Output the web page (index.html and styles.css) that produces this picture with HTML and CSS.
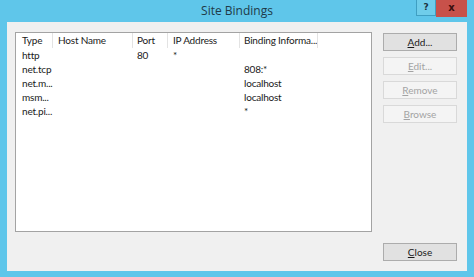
FILE: index.html
```html
<!DOCTYPE html>
<html>
<head>
<meta charset="utf-8">
<link rel="stylesheet" href="styles.css">
</head>
<body>
<div class="window">
  <div class="titlebar">
    <div class="tb-spacer"></div>
    <div class="title">Site Bindings</div>
    <div class="tb-buttons">
      <div class="tb-help">?</div>
      <div class="tb-close">x</div>
    </div>
  </div>
  <div class="client">
    <div class="main">
      <div class="list">
        <div class="row head">
          <div class="c c-type">Type</div>
          <div class="c c-host">Host Name</div>
          <div class="c c-port">Port</div>
          <div class="c c-ip">IP Address</div>
          <div class="c c-bind">Binding Informa...</div>
          <div class="c c-rest"></div>
        </div>
        <div class="row">
          <div class="c c-type">http</div>
          <div class="c c-host"></div>
          <div class="c c-port">80</div>
          <div class="c c-ip">*</div>
          <div class="c c-bind"></div>
        </div>
        <div class="row">
          <div class="c c-type">net.tcp</div>
          <div class="c c-host"></div>
          <div class="c c-port"></div>
          <div class="c c-ip"></div>
          <div class="c c-bind">808:*</div>
        </div>
        <div class="row">
          <div class="c c-type">net.m...</div>
          <div class="c c-host"></div>
          <div class="c c-port"></div>
          <div class="c c-ip"></div>
          <div class="c c-bind">localhost</div>
        </div>
        <div class="row">
          <div class="c c-type">msm...</div>
          <div class="c c-host"></div>
          <div class="c c-port"></div>
          <div class="c c-ip"></div>
          <div class="c c-bind">localhost</div>
        </div>
        <div class="row">
          <div class="c c-type">net.pi...</div>
          <div class="c c-host"></div>
          <div class="c c-port"></div>
          <div class="c c-ip"></div>
          <div class="c c-bind">*</div>
        </div>
      </div>
      <div class="buttons">
        <div class="btn"><span class="u">A</span>dd...</div>
        <div class="btn disabled"><span class="u">E</span>dit...</div>
        <div class="btn disabled"><span class="u">R</span>emove</div>
        <div class="btn disabled"><span class="u">B</span>rowse</div>
      </div>
    </div>
    <div class="footer">
      <div class="btn"><span class="u">C</span>lose</div>
    </div>
  </div>
</div>
</body>
</html>
```
FILE: styles.css
```css
* { box-sizing: border-box; }
html, body { margin: 0; padding: 0; }
body {
  width: 474px;
  height: 277px;
  background: #5fc6ea;
  font-family: Lato, "Open Sans", sans-serif;
  font-size: 10px;
  color: #1a1a1a;
  overflow: hidden;
}
.window {
  width: 474px;
  height: 277px;
  display: flex;
  flex-direction: column;
}
.titlebar {
  height: 22px;
  display: grid;
  grid-template-columns: 1fr auto 1fr;
  align-items: start;
  padding-right: 7px;
}
.title {
  font-family: "Open Sans", sans-serif;
  font-size: 12px;
  line-height: 22px;
  color: #203a48;
  padding-left: 7px;
}
.tb-buttons {
  display: flex;
  justify-content: flex-end;
}
.tb-help {
  width: 20px;
  height: 16px;
  background: #6fcdea;
  border: 1px solid #3f9fc2;
  border-top: none;
  font-family: "DejaVu Sans", sans-serif;
  font-weight: bold;
  font-size: 9px;
  line-height: 15px;
  text-align: center;
  color: #1c3440;
}
.tb-close {
  width: 31px;
  height: 17px;
  background: #c8514a;
  font-family: "DejaVu Sans", sans-serif;
  font-weight: bold;
  font-size: 10px;
  line-height: 15px;
  text-align: center;
  color: #3a0d0d;
}
.client {
  flex: 1;
  margin: 0 7px 6px 7px;
  background: #f0f0f0;
  padding: 10px 10px 10px 8px;
  display: flex;
  flex-direction: column;
}
.main {
  display: flex;
  gap: 11px;
}
.list {
  width: 357px;
  height: 200px;
  background: #fff;
  border: 1px solid #a3a3a3;
  display: flex;
  flex-direction: column;
  letter-spacing: -0.2px;
}
.row {
  display: flex;
  height: 14px;
  line-height: 14px;
  white-space: nowrap;
}
.row.head {
  height: 15px;
  line-height: 15px;
}
.c {
  padding-left: 5px;
  overflow: hidden;
}
.head .c { border-right: 1px solid #e3e3e3; }
.head .c-rest { border-right: none; flex: 1; }
.c-type { width: 37px; padding-left: 6px; }
.c-host { width: 80px; }
.c-port { width: 35px; padding-left: 4px; }
.c-ip { width: 72px; }
.c-bind { width: 78px; padding-left: 4px; }
.buttons {
  display: flex;
  flex-direction: column;
  gap: 6px;
  padding-top: 1px;
}
.btn {
  width: 74px;
  height: 18px;
  line-height: 16px;
  text-align: center;
  background: #e1e1e1;
  border: 1px solid #acacac;
  color: #1a1a1a;
}
.btn.disabled {
  background: #f4f4f4;
  border-color: #d9d9d9;
  color: #a3a3a3;
}
.u { text-decoration: underline; }
.footer {
  margin-top: auto;
  display: flex;
  justify-content: flex-end;
}
```
